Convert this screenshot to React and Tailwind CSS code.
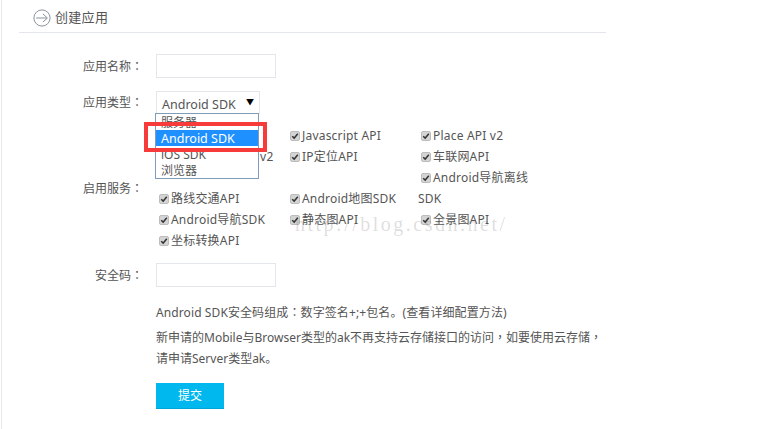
import React from "react";

const Punct = ({ children }) => <span className="font-['Noto_Sans_CJK_TC',sans-serif]">{children}</span>;

function Check({ children, className = "" }) {
  return (
    <div className={"h-[21px] leading-[21px] pl-[3px] whitespace-nowrap flex items-center tracking-[0.2px] " + className}>
      <span className="w-[10px] h-[10px] mr-[2px] shrink-0 rounded-[2px] bg-[#d4d4d4] border border-[#bdbdbd] flex items-center justify-center">
        <svg viewBox="0 0 10 10" className="w-[8px] h-[8px]"><path d="M1.5 5.2 L4 7.6 L8.5 2.2" fill="none" stroke="#333" strokeWidth="1.8" /></svg>
      </span>
      <span>{children}</span>
    </div>
  );
}

function Row({ label, className = "", children }) {
  return (
    <div className={"flex " + className}>
      <div className="w-[156px] pr-[13px] text-right text-[12px] text-[#555]">{label}<Punct>：</Punct></div>
      <div className="flex-1">{children}</div>
    </div>
  );
}

export default function App() {
  return (
    <div className="relative w-[782px] h-[429px] overflow-hidden bg-white text-[#555] text-[12px] font-['Noto_Sans','Noto_Sans_CJK_SC',sans-serif]">
      <div className="ml-[1px] h-full border-l border-[#e6e9ee] pl-[17px]">
        <div className="w-[587px] h-[33px] border-b border-[#e3e6eb] flex items-center pl-[14px] pt-[4px]">
          <svg viewBox="0 0 20 20" className="w-[18px] h-[18px] mr-[4px]" fill="none" stroke="#8a929c" strokeWidth="1.1">
            <circle cx="10" cy="10" r="9" />
            <path d="M3.5 10 H15.5 M11 5.5 L16 10 L11 14.5" />
          </svg>
          <span className="text-[13px] text-[#555] tracking-[0.3px]">创建应用</span>
        </div>

        <div className="-ml-[19px]">
          <Row label="应用名称" className="mt-[21px] h-[24px] items-center">
            <div className="w-[120px] h-[24px] border border-[#e3e6eb] bg-white" />
          </Row>

          <Row label="应用类型" className="mt-[13px] h-[23px] items-center">
            <div className="w-[104px] h-[23px] border border-[#e3e6eb] border-b-0 flex items-center pl-[5px] pr-[5px] pt-[4px] justify-between text-[12.5px]">
              <span>Android SDK</span>
              <span className="text-[8px] text-black mb-[6px]">▼</span>
            </div>
          </Row>

          <div className="flex mt-[11px]">
            <div className="w-[156px] pr-[13px] text-right self-center">启用服务<Punct>：</Punct></div>
            <div className="grid grid-cols-[131px_131px_131px] auto-rows-[21px]">
              <Check>云存储API</Check>
              <Check>Javascript API</Check>
              <Check>Place API v2</Check>
              <Check>Geocoding API v2</Check>
              <Check>IP定位API</Check>
              <Check>车联网API</Check>
              <div />
              <div />
              <Check>Android导航离线</Check>
              <Check>路线交通API</Check>
              <Check>Android地图SDK</Check>
              <div className="leading-[21px] tracking-[0.2px]">SDK</div>
              <Check>Android导航SDK</Check>
              <Check>静态图API</Check>
              <Check>全景图API</Check>
              <Check>坐标转换API</Check>
            </div>
          </div>

          <Row label="安全码" className="mt-[12px] h-[24px] items-center">
            <div className="w-[120px] h-[24px] border border-[#e3e6eb] bg-white" />
          </Row>

          <div className="ml-[156px] mt-[13px] w-[460px] leading-[24px]">
            <p className="tracking-[0.1px]">Android SDK安全码组成<Punct>：</Punct>数字签名+;+包名。(查看详细配置方法)</p>
            <p className="mt-0">新申请的Mobile与Browser类型的ak不再支持云存储接口的访问<Punct>，</Punct>如要使用云存储<Punct>，</Punct></p>
            <p className="mt-[-3px]">请申请Server类型ak。</p>
          </div>

          <button className="block ml-[156px] mt-[12px] w-[68px] h-[26px] bg-[#00b7ee] text-white text-[12px] border-b border-[#00a5d8]">提交</button>
        </div>
      </div>

      <div className="absolute left-[155px] top-[113px] w-[104px] h-[66px] border border-[#7f9db9] bg-white text-[12px] leading-[15px] pt-px">
        <div className="pl-[5px] h-[15px]">服务器</div>
        <div className="pl-[5px] h-[16px] pt-px bg-[#1e90ff] text-white text-[12.5px]">Android SDK</div>
        <div className="pl-[5px] h-[16px] pt-px">iOS SDK</div>
        <div className="pl-[5px] h-[15px] pt-px">浏览器</div>
      </div>
      <div className="absolute left-[144px] top-[122px] w-[123px] h-[30px] border-[4px] border-[#f73b3b]" />
      <div className="absolute left-[295px] top-[209px] text-[20px] tracking-[2.5px] text-[#555]/20 font-['Liberation_Serif',serif] whitespace-nowrap">http://blog.csdn.net/</div>
    </div>
  );
}
